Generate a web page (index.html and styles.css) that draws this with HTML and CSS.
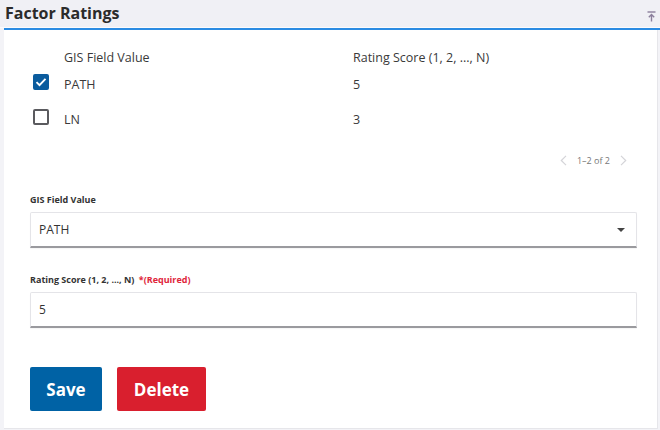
FILE: index.html
```html
<!DOCTYPE html>
<html lang="en">
<head>
<meta charset="utf-8">
<title>Factor Ratings</title>
<link rel="stylesheet" href="styles.css">
</head>
<body>
<header class="hdr">
  <h1 class="title">Factor Ratings</h1>
  <span class="pin" aria-label="Collapse">
    <svg width="9" height="11" viewBox="0 0 9 11"><path d="M0.5 1H8.5" stroke="#8b7f9c" stroke-width="1.4"/><path d="M4.5 10.5V3.5M1.8 6.2L4.5 3.5L7.2 6.2" stroke="#8b7f9c" stroke-width="1.4" fill="none"/></svg>
  </span>
</header>
<div class="wrap">
  <main class="panel">
    <div class="grid">
      <div class="row head">
        <span class="cb-cell"></span>
        <span class="c1">GIS Field Value</span>
        <span class="c2">Rating Score (1, 2, ..., N)</span>
      </div>
      <div class="row">
        <span class="cb-cell"><span class="cb checked"><svg width="12" height="10" viewBox="0 0 12 10"><path d="M1.5 5.2L4.5 8.2L10.5 1.8" stroke="#fff" stroke-width="1.9" fill="none"/></svg></span></span>
        <span class="c1">PATH</span>
        <span class="c2">5</span>
      </div>
      <div class="row">
        <span class="cb-cell"><span class="cb"></span></span>
        <span class="c1">LN</span>
        <span class="c2">3</span>
      </div>
    </div>
    <div class="pager">
      <svg class="chev" width="7" height="11" viewBox="0 0 7 11"><path d="M6 0.8L1.3 5.5L6 10.2" stroke="#d4d4d8" stroke-width="1.2" fill="none"/></svg>
      <span class="range">1–2 of 2</span>
      <svg class="chev" width="7" height="11" viewBox="0 0 7 11"><path d="M1 0.8L5.7 5.5L1 10.2" stroke="#d4d4d8" stroke-width="1.2" fill="none"/></svg>
    </div>
    <div class="field">
      <label class="lbl">GIS Field Value</label>
      <div class="box select"><span>PATH</span><span class="caret"></span></div>
    </div>
    <div class="field second">
      <label class="lbl">Rating Score (1, 2, ..., N) <span class="req">*(Required)</span></label>
      <div class="box"><span>5</span></div>
    </div>
    <div class="actions">
      <button class="btn save">Save</button>
      <button class="btn del">Delete</button>
    </div>
  </main>
</div>
</body>
</html>
```

FILE: styles.css
```css
* { box-sizing: border-box; }
html, body { margin: 0; padding: 0; }
body {
  background: #f3f3f7;
  font-family: "Open Sans", "Noto Sans", sans-serif;
  color: #333;
  width: 660px;
  height: 430px;
  overflow: hidden;
}
.hdr {
  height: 28px;
  background: #f0f0f5;
  border-bottom: 1px solid #fbfbfd;
  display: flex;
  align-items: center;
  justify-content: space-between;
  padding: 0 4px 0 5px;
}
.title {
  margin: 0;
  font-size: 16px;
  font-weight: 700;
  color: #2b2b2b;
  line-height: 22px;
  margin-top: -2px;
}
.pin { display: flex; margin-top: 5px; }
.wrap {
  margin-left: 4px;
  border-top: 2px solid #2b8be2;
}
.panel {
  display: block;
  width: 654px;
  height: 399px;
  background: #fff;
  border-right: 1px solid #e6e6ea;
  border-bottom: 1px solid #e6e6ea;
  padding: 18px 20px 0 26px;
}
.grid { margin-left: 3px; }
.row {
  display: flex;
  align-items: flex-start;
  height: 35px;
  padding-top: 6px;
  font-size: 12.5px;
}
.row.head { height: 20px; padding-top: 0; line-height: 20px; color: #444; }
.row .c1, .row .c2 { line-height: 18px; margin-top: 2px; }
.row.head .c1, .row.head .c2 { line-height: 20px; margin-top: 0; }
.cb-cell { width: 31px; flex: none; display: flex; }
.c1 { width: 289px; flex: none; color: #3a3a3a; }
.c2 { color: #3a3a3a; }
.cb {
  width: 16px; height: 16px;
  border: 2px solid #5a5a5e;
  border-radius: 2px;
  display: flex; align-items: center; justify-content: center;
}
.cb.checked { background: #0b5c9e; border-color: #0b5c9e; }
.pager {
  margin-top: 14px;
  height: 16px;
  display: flex;
  align-items: center;
  justify-content: flex-end;
  gap: 10px;
  padding-right: 10px;
  font-size: 9px;
  color: #777;
}
.field { margin-top: 26px; }
.field.second { margin-top: 26px; }
.lbl {
  display: block;
  font-size: 9px;
  font-weight: 700;
  line-height: 12px;
  color: #333;
  margin-bottom: 6px;
}
.req { color: #e0263b; margin-left: 2px; }
.box {
  height: 36px;
  border: 1px solid #e4e4e8;
  border-bottom: 2px solid #9a9a9e;
  border-radius: 2px 2px 0 0;
  display: flex;
  align-items: center;
  justify-content: space-between;
  padding: 0 11px 0 8px;
  font-size: 12px;
  color: #333;
  box-shadow: 0 1px 1px rgba(0,0,0,0.04);
}
.caret {
  width: 0; height: 0;
  border-left: 4px solid transparent;
  border-right: 4px solid transparent;
  border-top: 4px solid #444;
}
.actions {
  margin-top: 39px;
  display: flex;
  gap: 15px;
}
.btn {
  height: 44px;
  border: none;
  border-radius: 2px;
  color: #fff;
  font-family: "Open Sans", "Noto Sans", sans-serif;
  font-weight: 700;
  font-size: 17px;
  padding: 0;
}
.save { width: 72px; background: #0062a5; }
.del { width: 89px; background: #d91f2e; }
```
